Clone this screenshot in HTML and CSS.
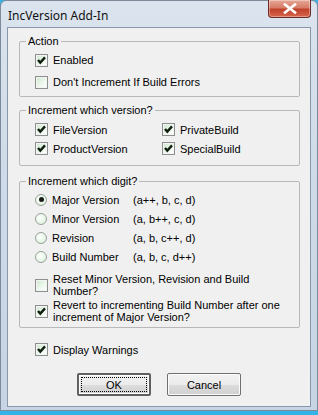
FILE: index.html
```html
<!DOCTYPE html>
<html lang="en">
<head>
    <meta charset="UTF-8">
    <title>IncVersion Add-In</title>
    <link rel="stylesheet" href="styles.css">
</head>
<body>
    <div class="janela">
        <div class="titulo">
            <span class="titulo-texto">IncVersion Add-In</span>
            <span class="fechar">
                <svg width="14" height="11" viewBox="0 0 14 11"><path d="M2 1.5 L12 9.5 M12 1.5 L2 9.5" stroke="#fff" stroke-width="2.6" stroke-linecap="square"/></svg>
            </span>
        </div>

        <div class="cliente">

            <!-- Grupo Action -->
            <fieldset class="grupo grupo-acao">
                <legend>Action</legend>
                <div class="linha alta"><span class="caixa marcada"></span>Enabled</div>
                <div class="linha alta"><span class="caixa"></span>Don't Increment If Build Errors</div>
            </fieldset>

            <!-- Grupo versao -->
            <fieldset class="grupo grupo-versao">
                <legend>Increment which version?</legend>
                <div class="grade">
                    <div class="linha"><span class="caixa marcada"></span>FileVersion</div>
                    <div class="linha"><span class="caixa marcada"></span>PrivateBuild</div>
                    <div class="linha"><span class="caixa marcada"></span>ProductVersion</div>
                    <div class="linha"><span class="caixa marcada"></span>SpecialBuild</div>
                </div>
            </fieldset>

            <!-- Grupo digito -->
            <fieldset class="grupo grupo-digito">
                <legend>Increment which digit?</legend>
                <div class="linha"><span class="radio ativo"></span><span class="nome">Major Version</span>(a++, b, c, d)</div>
                <div class="linha"><span class="radio"></span><span class="nome">Minor Version</span>(a, b++, c, d)</div>
                <div class="linha"><span class="radio"></span><span class="nome">Revision</span>(a, b, c++, d)</div>
                <div class="linha"><span class="radio"></span><span class="nome">Build Number</span>(a, b, c, d++)</div>
                <div class="linha dupla reset"><span class="caixa"></span><span>Reset Minor Version, Revision and Build<br>Number?</span></div>
                <div class="linha dupla revert"><span class="caixa marcada"></span><span>Revert to incrementing Build Number after one<br>increment of Major Version?</span></div>
            </fieldset>

            <div class="linha avisos"><span class="caixa marcada"></span>Display Warnings</div>

            <div class="botoes">
                <button class="botao padrao"><span>OK</span></button>
                <button class="botao">Cancel</button>
            </div>
        </div>
    </div>
</body>
</html>
```

FILE: styles.css
```css
* {
    margin: 0;
    padding: 0;
    box-sizing: border-box;
}

body {
    background-color: #35b2e6;
    height: 415px;
    overflow: hidden;
    font-family: "Liberation Sans", Arial, sans-serif;
    font-size: 11px;
    color: #000;
}

.janela {
    width: 318px;
    height: 411px;
    background: linear-gradient(to bottom, #dbe4ee 0%, #cfdbe8 40%, #c6d4e3 100%);
    border: 1px solid #7c8a99;
    border-radius: 6px 6px 0 0;
    display: flex;
    flex-direction: column;
}

.titulo {
    height: 26px;
    display: flex;
    justify-content: space-between;
    align-items: flex-start;
}

.titulo-texto {
    font-family: "Noto Sans", sans-serif;
    font-size: 12px;
    padding: 6px 0 0 7px;
    color: #111;
}

.fechar {
    width: 43px;
    height: 18px;
    margin: -1px 6px 0 0;
    border: 1px solid #6b2a24;
    border-top: none;
    border-radius: 0 0 4px 4px;
    background: linear-gradient(to bottom, #e6a796 0%, #d77d69 45%, #c0412b 55%, #d7664c 100%);
    display: flex;
    align-items: center;
    justify-content: center;
    box-shadow: inset 0 0 0 1px rgba(255, 255, 255, 0.35);
}

.cliente {
    margin: 0 6px;
    height: 380px;
    border: 1px solid #8898aa;
    background-color: #f0f0f0;
    display: flex;
    flex-direction: column;
}

.grupo {
    border: 1px solid #b8b8b8;
    border-radius: 2px;
    margin: 7px 10px 0 11px;
    padding: 1px 0 3px 15px;
    min-width: 0;
}

.grupo legend {
    line-height: 13px;
    padding: 0 2px 0 2px;
    margin-left: -9px;
}

.grupo-versao {
    padding: 3px 0 7px 15px;
}

.grupo-digito {
    margin-top: 9px;
    padding: 2px 0 4px 15px;
}

.linha {
    height: 19px;
    display: flex;
    align-items: center;
    white-space: nowrap;
}

.linha.alta {
    height: 22px;
}

.grade {
    display: grid;
    grid-template-columns: 127px 1fr;
}

.nome {
    width: 81px;
}

.linha.dupla {
    height: auto;
    line-height: 12px;
    align-items: center;
}

.reset {
    margin-top: 7px;
}

.revert {
    margin-top: 2px;
}

/* caixas de marcar */
.caixa {
    width: 13px;
    height: 13px;
    border: 1px solid #8d8f8f;
    background: linear-gradient(135deg, #cfe6cf 0%, #eef9ee 60%, #ffffff 100%);
    box-shadow: inset 0 0 0 1px #f4f4f4;
    margin-right: 5px;
    flex-shrink: 0;
}

.caixa.marcada {
    background-image: url("data:image/svg+xml;utf8,<svg xmlns='http://www.w3.org/2000/svg' width='11' height='11' viewBox='0 0 11 11'><path d='M2 5 L4.3 7.6 L9 2.4' fill='none' stroke='%23101e10' stroke-width='2.4'/></svg>"), linear-gradient(135deg, #cfe6cf 0%, #eef9ee 60%, #ffffff 100%);
    background-repeat: no-repeat;
    background-position: center;
}

/* botoes de opcao */
.radio {
    width: 12px;
    height: 12px;
    border-radius: 50%;
    border: 1px solid #9aa09a;
    background: radial-gradient(circle at 40% 40%, #ffffff 0%, #e6f6e6 60%, #cde6cd 100%);
    margin-right: 5px;
    flex-shrink: 0;
    display: flex;
    align-items: center;
    justify-content: center;
}

.radio.ativo::after {
    content: "";
    width: 5px;
    height: 5px;
    border-radius: 50%;
    background: #1a1a1a;
}

.avisos {
    margin: 12px 0 0 27px;
}

.botoes {
    display: flex;
    justify-content: center;
    gap: 16px;
    margin-top: 14px;
}

.botao {
    width: 74px;
    height: 23px;
    font-family: "Liberation Sans", Arial, sans-serif;
    font-size: 11px;
    color: #000;
    border: 1px solid #707070;
    border-radius: 2px;
    background: linear-gradient(to bottom, #f2f2f2 0%, #ebebeb 50%, #dddddd 51%, #cfcfcf 100%);
    box-shadow: inset 0 0 0 1px #fcfcfc;
}

.botao.padrao {
    border: 2px solid #606060;
    padding: 2px;
}

.botao.padrao span {
    display: flex;
    align-items: center;
    justify-content: center;
    height: 100%;
    border: 1px dotted #000;
}
```
